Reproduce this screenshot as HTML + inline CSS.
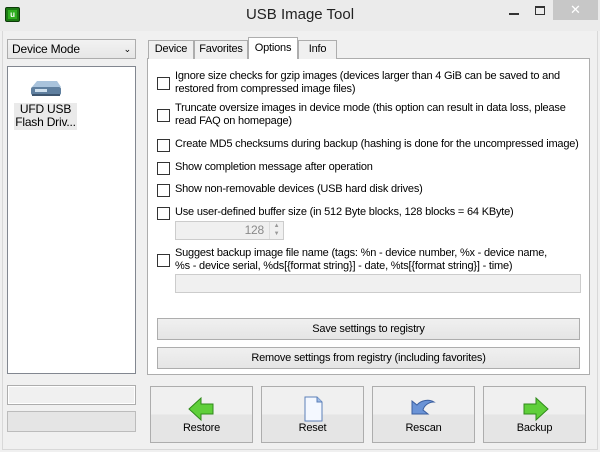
<!DOCTYPE html>
<html><head><meta charset="utf-8"><style>
*{margin:0;padding:0;box-sizing:border-box}
body{width:600px;height:452px;background:#f0f0f0;font-family:"Liberation Sans",sans-serif;font-size:11px;color:#000;position:relative;overflow:hidden;letter-spacing:-0.2px}
.a{position:absolute}
.title{left:0;top:0;width:600px;height:31px;background:#ebebeb}
.frame{left:2px;top:31px;width:596px;height:419px;border:1px solid #d8d8d8;border-top:none;background:#f0f0f0}
.cb{position:absolute;width:13px;height:13px;border:1px solid #333;background:#fff}
.t{position:absolute;left:175px;line-height:13px;white-space:nowrap}
.btn{position:absolute;border:1px solid #adadad;background:linear-gradient(#f0f0f0,#e5e5e5);text-align:center}
.big{position:absolute;top:386px;width:103px;height:57px;border:1px solid #adadad;background:linear-gradient(#f0f0f0 50%,#e5e5e5 50%);text-align:center;font-size:11px}
.big span{position:absolute;left:0;right:0;top:35px}
.big svg{position:absolute;left:36px;top:9px}
.tab{position:absolute;top:40px;height:19px;border:1px solid #adadad;border-bottom:none;background:#f0f0f0;text-align:center;line-height:17px;font-size:11px}
</style></head><body>
<div class="a title"></div>
<div class="a frame"></div>
<div class="a" style="left:5px;top:7px;width:15px;height:15px;background:#1d7a14;border:1px solid #0c3a08;border-radius:2px"></div>
<div class="a" style="left:8px;top:10px;width:9px;height:9px;background:#2fae1f;color:#fff;font-size:8px;font-weight:bold;text-align:center;line-height:9px">u</div>
<div class="a" style="left:0;width:600px;top:6px;text-align:center;font-size:15px;color:#222;letter-spacing:0">USB Image Tool</div>
<div class="a" style="left:509px;top:13px;width:10px;height:2px;background:#333"></div>
<div class="a" style="left:535px;top:6px;width:10px;height:9px;border:1px solid #333;border-top-width:2px"></div>
<div class="a" style="left:553px;top:0;width:45px;height:20px;background:#c7c7c7;color:#fff;text-align:center;font-size:13px;line-height:20px;letter-spacing:0">✕</div>

<div class="a" style="left:7px;top:39px;width:129px;height:20px;border:1px solid #adadad;background:linear-gradient(#f2f2f2,#e6e6e6);padding-left:4px;line-height:18px;font-size:12px">Device Mode<span style="position:absolute;right:4px;top:0;font-size:9px">&#8964;</span></div>
<div class="a" style="left:7px;top:66px;width:129px;height:308px;border:1px solid #828790;background:#fff"></div>
<svg class="a" style="left:29px;top:78px" width="34" height="20" viewBox="0 0 34 20"><path d="M3 9 L8 3 L28 3 L32 9 Z" fill="#a9c3dc"/><rect x="2" y="9" width="30" height="8" rx="2" fill="#5f7f9f"/><rect x="6" y="11" width="12" height="3" fill="#cfe0ee"/><rect x="3" y="16" width="28" height="2" fill="#3e5670"/></svg>
<div class="a" style="left:14px;top:103px;width:63px;height:27px;background:#eaeaea;text-align:center;line-height:13px;font-size:12px">UFD USB<br>Flash Driv...</div>
<div class="a" style="left:7px;top:385px;width:129px;height:20px;border:1px solid #adadad;background:#f0f0f0;box-shadow:inset 0 0 0 1px #fff"></div>
<div class="a" style="left:7px;top:411px;width:129px;height:21px;border:1px solid #bcbcbc;background:#e5e5e5"></div>

<div class="a" style="left:147px;top:58px;width:443px;height:317px;border:1px solid #adadad;background:#fff"></div>
<div class="tab" style="left:148px;width:46px">Device</div>
<div class="tab" style="left:194px;width:54px">Favorites</div>
<div class="tab" style="left:248px;top:37px;width:50px;height:22px;background:#fff;line-height:20px">Options</div>
<div class="tab" style="left:298px;width:39px">Info</div>

<div class="cb" style="left:157px;top:77px"></div>
<div class="t" style="top:70px">Ignore size checks for gzip images (devices larger than 4 GiB can be saved to and<br>restored from compressed image files)</div>
<div class="cb" style="left:157px;top:109px"></div>
<div class="t" style="top:102px">Truncate oversize images in device mode (this option can result in data loss, please<br>read FAQ on homepage)</div>
<div class="cb" style="left:157px;top:139px"></div>
<div class="t" style="top:138px">Create MD5 checksums during backup (hashing is done for the uncompressed image)</div>
<div class="cb" style="left:157px;top:162px"></div>
<div class="t" style="top:161px">Show completion message after operation</div>
<div class="cb" style="left:157px;top:184px"></div>
<div class="t" style="top:183px">Show non-removable devices (USB hard disk drives)</div>
<div class="cb" style="left:157px;top:207px"></div>
<div class="t" style="top:206px">Use user-defined buffer size (in 512 Byte blocks, 128 blocks = 64 KByte)</div>
<div class="a" style="left:175px;top:221px;width:109px;height:19px;border:1px solid #ccc;background:#f0f0f0;color:#8a8a8a;text-align:right;padding-right:19px;line-height:17px;font-size:12px">128</div>
<div class="a" style="left:269px;top:222px;width:14px;height:17px;border-left:1px solid #ddd;color:#999;font-size:6px;text-align:center;line-height:8px">▲<br>▼</div>
<div class="cb" style="left:157px;top:254px"></div>
<div class="t" style="top:247px">Suggest backup image file name (tags: %n - device number, %x - device name,<br>%s - device serial, %ds[{format string}] - date, %ts[{format string}] - time)</div>
<div class="a" style="left:175px;top:274px;width:406px;height:19px;border:1px solid #ccc;background:#f0f0f0"></div>
<div class="btn" style="left:157px;top:318px;width:423px;height:22px;line-height:20px">Save settings to registry</div>
<div class="btn" style="left:157px;top:347px;width:423px;height:22px;line-height:20px">Remove settings from registry (including favorites)</div>

<div class="big" style="left:150px"><svg width="30" height="26" viewBox="0 0 30 26"><path d="M2 13 L14 2 L14 8 L26 8 L26 18 L14 18 L14 24 Z" fill="#5fcf3a" stroke="#2f8a1a"/></svg><span>Restore</span></div>
<div class="big" style="left:261px"><svg width="30" height="26" viewBox="0 0 30 26"><path d="M7 1 L19 1 L24 6 L24 25 L7 25 Z" fill="#f4f8ff" stroke="#5b7fb8"/><path d="M19 1 L19 6 L24 6" fill="#9fbce6" stroke="#5b7fb8"/></svg><span>Reset</span></div>
<div class="big" style="left:372px"><svg width="30" height="26" viewBox="0 0 30 26"><path d="M3 5 L8 9 C12 4 20 3 25 6 C19 6 15 10 14 14 L19 18 L3 18 Z" fill="#6a93d6" stroke="#3b5fa0"/></svg><span>Rescan</span></div>
<div class="big" style="left:483px"><svg width="30" height="26" viewBox="0 0 30 26"><path d="M28 13 L16 2 L16 8 L4 8 L4 18 L16 18 L16 24 Z" fill="#5fcf3a" stroke="#2f8a1a"/></svg><span>Backup</span></div>
</body></html>
